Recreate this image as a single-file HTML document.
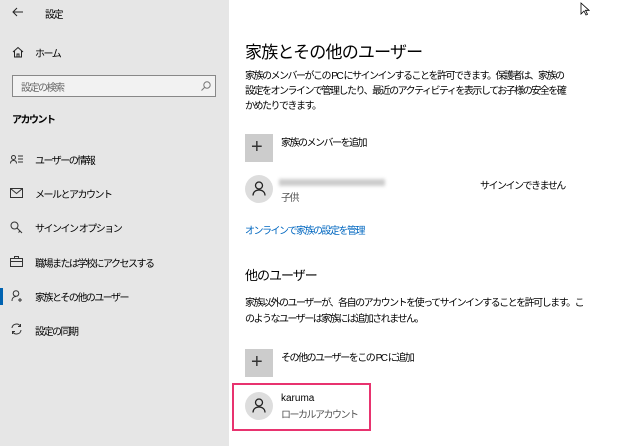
<!DOCTYPE html>
<html><head><meta charset="utf-8"><style>
*{margin:0;padding:0;box-sizing:border-box}
body{width:640px;height:446px;overflow:hidden;font-family:"Liberation Sans","Noto Sans CJK JP",sans-serif;color:#000;background:#fff;position:relative}
.side{position:absolute;left:0;top:0;width:229px;height:446px;background:#e6e6e6}
.t{position:absolute;white-space:nowrap;font-size:10px;letter-spacing:-1.5px}
.ic{position:absolute}
</style></head><body>
<div class="side">
<svg class="ic" style="left:12px;top:6px" width="12" height="12" viewBox="0 0 12 12" fill="none" stroke="#222" stroke-width="1"><path d="M1 6h10M5 2L1 6l4 4"/></svg>
<div class="t" style="left:45px;top:6px">設定</div>
<svg class="ic" style="left:12px;top:46px" width="12" height="12" viewBox="0 0 12 12" fill="none" stroke="#222"><path d="M1 6L6 1.5 11 6M2.5 5v6h7V5M5 11V8h2v3"/></svg>
<div class="t" style="left:35px;top:45px">ホーム</div>
<div style="position:absolute;left:12px;top:75px;width:204px;height:22px;border:1px solid #888;background:#f2f2f2"></div>
<div class="t" style="left:21px;top:79px;color:#666">設定の検索</div>
<svg class="ic" style="left:200px;top:80px" width="12" height="12" viewBox="0 0 12 12" fill="none" stroke="#777"><circle cx="7" cy="5" r="3.2"/><path d="M4.6 7.4L1.5 10.5"/></svg>
<div class="t" style="left:12px;top:111px;font-weight:bold">アカウント</div>
<svg class="ic" style="left:10px;top:154px" width="14" height="10" viewBox="0 0 14 10" fill="none" stroke="#333"><circle cx="3.5" cy="3.5" r="2"/><path d="M0.5 9.5c0-2 1.3-3 3-3s3 1 3 3M8 2h5M8 5h5M8 8h5"/></svg>
<div class="t" style="left:35px;top:152px">ユーザーの情報</div>
<svg class="ic" style="left:10px;top:188px" width="13" height="10" viewBox="0 0 13 10" fill="none" stroke="#333"><rect x="0.5" y="0.5" width="12" height="9"/><path d="M0.5 0.5l6 5 6-5"/></svg>
<div class="t" style="left:35px;top:186px">メールとアカウント</div>
<svg class="ic" style="left:10px;top:221px" width="13" height="13" viewBox="0 0 13 13" fill="none" stroke="#333"><circle cx="4.5" cy="4.5" r="3.5"/><path d="M7 7l5 5M10 10l-1.5 1.5"/></svg>
<div class="t" style="left:35px;top:220px">サインイン オプション</div>
<svg class="ic" style="left:10px;top:256px" width="13" height="11" viewBox="0 0 13 11" fill="none" stroke="#333"><rect x="0.5" y="2.5" width="12" height="8"/><path d="M4.5 2.5V.5h4v2M0.5 5.5h12"/></svg>
<div class="t" style="left:35px;top:255px">職場または学校にアクセスする</div>
<div style="position:absolute;left:0;top:288px;width:3px;height:17px;background:#0063b1"></div>
<svg class="ic" style="left:11px;top:290px" width="12" height="12" viewBox="0 0 12 12" fill="none" stroke="#333"><circle cx="5" cy="3.5" r="2.8"/><path d="M1 11c0-3 1.8-4.5 4-4.5M9 8v4M7 10h4"/></svg>
<div class="t" style="left:35px;top:289px">家族とその他のユーザー</div>
<svg class="ic" style="left:10px;top:323px" width="13" height="12" viewBox="0 0 13 12" fill="none" stroke="#333"><path d="M2 5a4.5 4.5 0 0 1 8.5-1.5M11 7a4.5 4.5 0 0 1-8.5 1.5M10.5 1v2.5H8M2.5 11V8.5H5"/></svg>
<div class="t" style="left:35px;top:323px">設定の同期</div>
</div>
<div class="t" style="left:245px;top:38px;font-size:17px;letter-spacing:-0.8px">家族とその他のユーザー</div>
<div class="t" style="left:245px;top:69px;line-height:15px">家族のメンバーがこの PC にサインインすることを許可できます。保護者は、家族の<br>設定をオンラインで管理したり、最近のアクティビティを表示してお子様の安全を確<br>かめたりできます。</div>
<div style="position:absolute;left:245px;top:134px;width:28px;height:28px;background:#ccc"></div>
<div class="t" style="left:251px;top:136px;font-size:20px;color:#333;letter-spacing:0">+</div>
<div class="t" style="left:281px;top:134px">家族のメンバーを追加</div>
<div style="position:absolute;left:245px;top:175px;width:28px;height:28px;border-radius:50%;background:#ddd"></div>
<svg class="ic" style="left:252px;top:181px" width="14" height="15" viewBox="0 0 14 15" fill="none" stroke="#222" stroke-width="1.3"><circle cx="7" cy="4.5" r="3.5"/><path d="M1 14.5c0-3.5 2.7-5.5 6-5.5s6 2 6 5.5"/></svg>
<div style="position:absolute;left:279px;top:179px;width:106px;height:7px;background:#ccc;filter:blur(1.5px)"></div>
<div class="t" style="left:281px;top:189px;color:#555">子供</div>
<div class="t" style="left:480px;top:177px">サインインできません</div>
<div class="t" style="left:245px;top:222px;color:#0067c0">オンラインで家族の設定を管理</div>
<div class="t" style="left:245px;top:265px;font-size:13px;letter-spacing:-1px">他のユーザー</div>
<div class="t" style="left:245px;top:296px;line-height:16px">家族以外のユーザーが、各自のアカウントを使ってサインインすることを許可します。こ<br>のようなユーザーは家族には追加されません。</div>
<div style="position:absolute;left:245px;top:349px;width:28px;height:28px;background:#ccc"></div>
<div class="t" style="left:251px;top:351px;font-size:20px;color:#333;letter-spacing:0">+</div>
<div class="t" style="left:281px;top:349px">その他のユーザーをこの PC に追加</div>
<div style="position:absolute;left:232px;top:383px;width:139px;height:48px;border:2px solid #e8336f"></div>
<div style="position:absolute;left:245px;top:392px;width:28px;height:28px;border-radius:50%;background:#ddd"></div>
<svg class="ic" style="left:252px;top:398px" width="14" height="15" viewBox="0 0 14 15" fill="none" stroke="#222" stroke-width="1.3"><circle cx="7" cy="4.5" r="3.5"/><path d="M1 14.5c0-3.5 2.7-5.5 6-5.5s6 2 6 5.5"/></svg>
<div class="t" style="left:281px;top:393px;letter-spacing:0">karuma</div>
<div class="t" style="left:281px;top:406px;color:#555">ローカルアカウント</div>
<svg class="ic" style="left:580px;top:2px" width="10" height="14" viewBox="0 0 10 14"><path d="M1 1v11l3-3 2 4 1.5-.7-2-4H9z" fill="#fff" stroke="#000" stroke-width="0.8"/></svg>
</body></html>
